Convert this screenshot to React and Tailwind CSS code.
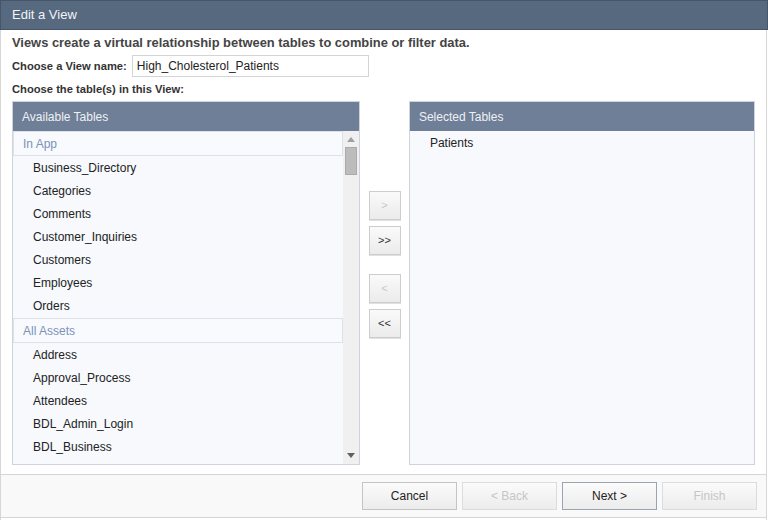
const inApp = ['Business_Directory', 'Categories', 'Comments', 'Customer_Inquiries', 'Customers', 'Employees', 'Orders'];
const allAssets = ['Address', 'Approval_Process', 'Attendees', 'BDL_Admin_Login', 'BDL_Business'];

function GroupHeader({ label }) {
  return (
    <div className="h-[25px] flex items-center px-[9px] border border-[#dde2ea] bg-[#f9fafd] text-[#7b93b8] text-[12px]">
      {label}
    </div>
  );
}

function Item({ label }) {
  return <div className="h-[23px] flex items-center pl-[20px] text-[12px] text-[#222]">{label}</div>;
}

function MoveButton({ label, disabled }) {
  return (
    <button
      className={`w-[32px] h-[29px] border border-[#cdcdcd] bg-gradient-to-b from-[#fafafa] to-[#ebebeb] text-[11px] shadow-[0_1px_0_#e0e0e0] ${disabled ? 'text-[#c8c8c8]' : 'text-[#333]'}`}
    >
      {label}
    </button>
  );
}

function FooterButton({ label, disabled, primary }) {
  return (
    <button
      className={`w-[95px] h-[28px] border bg-gradient-to-b from-[#fbfbfb] to-[#ececec] text-[12px] ${
        primary ? 'border-[#9aa3ae] text-[#222]' : disabled ? 'border-[#dcdcdc] text-[#c6c6c6]' : 'border-[#c4c4c4] text-[#222]'
      }`}
    >
      {label}
    </button>
  );
}

export default function App() {
  return (
    <div className="w-[768px] h-[520px] bg-white flex flex-col" style={{ fontFamily: '"Liberation Sans", Arial, sans-serif' }}>
      <div className="h-[30px] shrink-0 bg-[#57697f] border border-[#45556a] text-[#f2f4f7] text-[13px] flex items-center px-[11px]">
        Edit a View
      </div>

      <div className="flex-1 flex flex-col border-x border-[#d6d6d6] mr-[1px]">
        <div className="px-[11px] pt-[5px]">
          <div className="text-[12.9px] font-bold text-[#444] leading-[16px]">
            Views create a virtual relationship between tables to combine or filter data.
          </div>
          <div className="flex items-center gap-[5px] mt-[4px]">
            <span className="text-[11.2px] font-bold text-[#333]">Choose a View name:</span>
            <input
              className="w-[237px] h-[22px] border border-[#d4d4d4] px-[4px] text-[12px] text-[#222] outline-none"
              defaultValue="High_Cholesterol_Patients"
            />
          </div>
          <div className="text-[11.2px] font-bold text-[#333] leading-[14px] mt-[5px]">Choose the table(s) in this View:</div>

          <div className="flex mt-[5px] h-[364px]">
            <div className="w-[349px] flex flex-col border border-[#cfd4dc]">
              <div className="h-[29px] shrink-0 bg-[#6e7f97] text-[#eef1f5] text-[12px] flex items-center px-[9px]">
                Available Tables
              </div>
              <div className="flex-1 flex overflow-hidden bg-[#f7f9fd]">
                <div className="flex-1 overflow-hidden">
                  <GroupHeader label="In App" />
                  {inApp.map((t) => (
                    <Item key={t} label={t} />
                  ))}
                  <div className="h-[1px]" />
                  <GroupHeader label="All Assets" />
                  {allAssets.map((t) => (
                    <Item key={t} label={t} />
                  ))}
                </div>
                <div className="w-[16px] shrink-0 bg-[#f0f0f0] flex flex-col items-center py-[5px]">
                  <svg width="8" height="5" viewBox="0 0 8 5" className="mt-[1px]">
                    <path d="M4 0 L8 5 L0 5 Z" fill="#a0a0a0" />
                  </svg>
                  <div className="w-[12px] h-[28px] bg-[#bcbcbc] border border-[#aaa] mt-[5px]" />
                  <div className="flex-1" />
                  <svg width="8" height="5" viewBox="0 0 8 5" className="mb-[1px]">
                    <path d="M0 0 L8 0 L4 5 Z" fill="#606060" />
                  </svg>
                </div>
              </div>
            </div>

            <div className="w-[49px] flex flex-col items-center pt-[90px]">
              <MoveButton label=">" disabled />
              <div className="h-[6px]" />
              <MoveButton label=">>" />
              <div className="h-[19px]" />
              <MoveButton label="<" disabled />
              <div className="h-[6px]" />
              <MoveButton label="<<" />
            </div>

            <div className="w-[347px] flex flex-col border border-[#cfd4dc]">
              <div className="h-[29px] shrink-0 bg-[#6e7f97] text-[#eef1f5] text-[12px] flex items-center px-[9px]">
                Selected Tables
              </div>
              <div className="flex-1 bg-[#f7f9fd]">
                <Item label="Patients" />
              </div>
            </div>
          </div>
        </div>

        <div className="mt-[9px] flex-1 border-t border-b border-[#d6d6d6] bg-[#f9f9f9] flex justify-end items-start gap-[5px] pt-[7px] pr-[9px] mb-[2px]">
          <FooterButton label="Cancel" />
          <FooterButton label="< Back" disabled />
          <FooterButton label="Next >" primary />
          <FooterButton label="Finish" disabled />
        </div>
      </div>
    </div>
  );
}
